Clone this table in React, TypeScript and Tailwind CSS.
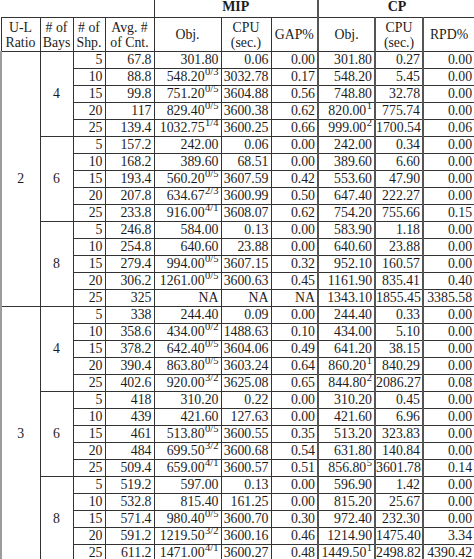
type Row = {
  shp: number;
  cnt: string;
  mipObj: string;
  mipSup?: string;
  mipCpu: string;
  gap: string;
  cpObj: string;
  cpSup?: string;
  cpCpu: string;
  rpd: string;
};

type Group = { ratio: number; bays: { n: number; rows: Row[] }[] };

const r = (
  shp: number,
  cnt: string,
  mipObj: string,
  mipSup: string | undefined,
  mipCpu: string,
  gap: string,
  cpObj: string,
  cpSup: string | undefined,
  cpCpu: string,
  rpd: string
): Row => ({ shp, cnt, mipObj, mipSup, mipCpu, gap, cpObj, cpSup, cpCpu, rpd });

const groups: Group[] = [
  {
    ratio: 2,
    bays: [
      {
        n: 4,
        rows: [
          r(5, "67.8", "301.80", undefined, "0.06", "0.00", "301.80", undefined, "0.27", "0.00"),
          r(10, "88.8", "548.20", "0/3", "3032.78", "0.17", "548.20", undefined, "5.45", "0.00"),
          r(15, "99.8", "751.20", "0/5", "3604.88", "0.56", "748.80", undefined, "32.78", "0.00"),
          r(20, "117", "829.40", "0/5", "3600.38", "0.62", "820.00", "1", "775.74", "0.00"),
          r(25, "139.4", "1032.75", "1/4", "3600.25", "0.66", "999.00", "2", "1700.54", "0.06"),
        ],
      },
      {
        n: 6,
        rows: [
          r(5, "157.2", "242.00", undefined, "0.06", "0.00", "242.00", undefined, "0.34", "0.00"),
          r(10, "168.2", "389.60", undefined, "68.51", "0.00", "389.60", undefined, "6.60", "0.00"),
          r(15, "193.4", "560.20", "0/5", "3607.59", "0.42", "553.60", undefined, "47.90", "0.00"),
          r(20, "207.8", "634.67", "2/3", "3600.99", "0.50", "647.40", undefined, "222.27", "0.00"),
          r(25, "233.8", "916.00", "4/1", "3608.07", "0.62", "754.20", undefined, "755.66", "0.15"),
        ],
      },
      {
        n: 8,
        rows: [
          r(5, "246.8", "584.00", undefined, "0.13", "0.00", "583.90", undefined, "1.18", "0.00"),
          r(10, "254.8", "640.60", undefined, "23.88", "0.00", "640.60", undefined, "23.88", "0.00"),
          r(15, "279.4", "994.00", "0/5", "3607.15", "0.32", "952.10", undefined, "160.57", "0.00"),
          r(20, "306.2", "1261.00", "0/5", "3600.63", "0.45", "1161.90", undefined, "835.41", "0.40"),
          r(25, "325", "NA", undefined, "NA", "NA", "1343.10", undefined, "1855.45", "3385.58"),
        ],
      },
    ],
  },
  {
    ratio: 3,
    bays: [
      {
        n: 4,
        rows: [
          r(5, "338", "244.40", undefined, "0.09", "0.00", "244.40", undefined, "0.33", "0.00"),
          r(10, "358.6", "434.00", "0/2", "1488.63", "0.10", "434.00", undefined, "5.10", "0.00"),
          r(15, "378.2", "642.40", "0/5", "3604.06", "0.49", "641.20", undefined, "38.15", "0.00"),
          r(20, "390.4", "863.80", "0/5", "3603.24", "0.64", "860.20", "1", "840.29", "0.00"),
          r(25, "402.6", "920.00", "3/2", "3625.08", "0.65", "844.80", "2", "2086.27", "0.08"),
        ],
      },
      {
        n: 6,
        rows: [
          r(5, "418", "310.20", undefined, "0.22", "0.00", "310.20", undefined, "0.45", "0.00"),
          r(10, "439", "421.60", undefined, "127.63", "0.00", "421.60", undefined, "6.96", "0.00"),
          r(15, "461", "513.80", "0/5", "3600.55", "0.35", "513.20", undefined, "323.83", "0.00"),
          r(20, "484", "699.50", "3/2", "3600.68", "0.54", "631.80", undefined, "140.84", "0.00"),
          r(25, "509.4", "659.00", "4/1", "3600.57", "0.51", "856.80", "5", "3601.78", "0.14"),
        ],
      },
      {
        n: 8,
        rows: [
          r(5, "519.2", "597.00", undefined, "0.13", "0.00", "596.90", undefined, "1.42", "0.00"),
          r(10, "532.8", "815.40", undefined, "161.25", "0.00", "815.20", undefined, "25.67", "0.00"),
          r(15, "571.4", "980.40", "0/5", "3600.70", "0.30", "972.40", undefined, "232.30", "0.00"),
          r(20, "591.2", "1219.50", "3/2", "3600.16", "0.46", "1214.90", undefined, "1475.40", "3.34"),
          r(25, "611.2", "1471.00", "4/1", "3600.27", "0.48", "1449.50", "1", "2498.82", "4390.42"),
        ],
      },
    ],
  },
];

const num = "border border-[#333] text-right pr-[2px] h-[17px] p-0 whitespace-nowrap leading-none";
const cpNum = "border border-[#333] border-l-2 border-l-[#555] text-right pr-[2px] h-[17px] p-0 whitespace-nowrap leading-none";
const head = "border border-[#333] text-center font-normal p-0 leading-[15px] align-middle";

function Val({ v, sup }: { v: string; sup?: string }) {
  return (
    <>
      {v}
      {sup && <sup className="text-[10.5px] leading-none ml-[0.5px] -top-[0.55em]">{sup}</sup>}
    </>
  );
}

export default function App() {
  return (
    <div className="w-[474px] h-[559px] overflow-hidden bg-white">
      <table className="border-collapse table-fixed w-[474px] text-[#1c1c1c] text-[13.8px] font-['Liberation_Serif',serif]">
        <colgroup>
          <col className="w-[39px]" />
          <col className="w-[33px]" />
          <col className="w-[32px]" />
          <col className="w-[49px]" />
          <col className="w-[67px]" />
          <col className="w-[50px]" />
          <col className="w-[47px]" />
          <col className="w-[57px]" />
          <col className="w-[48px]" />
          <col className="w-[52px]" />
        </colgroup>
        <thead>
          <tr className="h-[15px]">
            <th colSpan={4} className="p-0 border-b border-[#333]"></th>
            <th colSpan={3} className="p-0 pb-[3px] border-b border-l border-[#333] font-bold text-[14px] leading-none text-center">
              MIP
            </th>
            <th colSpan={3} className="p-0 pb-[3px] border-b border-l-2 border-l-[#555] border-b-[#333] font-bold text-[14px] leading-none text-center">
              CP
            </th>
          </tr>
          <tr className="h-[34px]">
            <th className={head}>U-L<br />Ratio</th>
            <th className={head}># of<br />Bays</th>
            <th className={head}># of<br />Shp.</th>
            <th className={head}>Avg. #<br />of Cnt.</th>
            <th className={head}>Obj.</th>
            <th className={head}>CPU<br />(sec.)</th>
            <th className={head}>GAP%</th>
            <th className={`${head} border-l-2 border-l-[#555]`}>Obj.</th>
            <th className={`${head} border-l-2 border-l-[#555]`}>CPU<br />(sec.)</th>
            <th className={`${head} border-l-2 border-l-[#555] border-r-2 border-r-[#666]`}>RPD%</th>
          </tr>
        </thead>
        <tbody>
          {groups.map((g) =>
            g.bays.map((b, bi) =>
              b.rows.map((row, ri) => (
                <tr key={`${g.ratio}-${b.n}-${row.shp}`} className="h-[17px]">
                  {bi === 0 && ri === 0 && (
                    <td rowSpan={15} className="border border-[#333] border-l-2 border-l-[#9c9c9c] text-center align-middle p-0">
                      {g.ratio}
                    </td>
                  )}
                  {ri === 0 && (
                    <td rowSpan={5} className="border border-[#333] text-center align-middle p-0">
                      {b.n}
                    </td>
                  )}
                  <td className={num}>{row.shp}</td>
                  <td className={num}>{row.cnt}</td>
                  <td className={num}>
                    <Val v={row.mipObj} sup={row.mipSup} />
                  </td>
                  <td className={num}>{row.mipCpu}</td>
                  <td className={num}>{row.gap}</td>
                  <td className={cpNum}>
                    <Val v={row.cpObj} sup={row.cpSup} />
                  </td>
                  <td className={cpNum}>{row.cpCpu}</td>
                  <td className={`${cpNum} border-r-2 border-r-[#666]`}>{row.rpd}</td>
                </tr>
              ))
            )
          )}
        </tbody>
      </table>
    </div>
  );
}
